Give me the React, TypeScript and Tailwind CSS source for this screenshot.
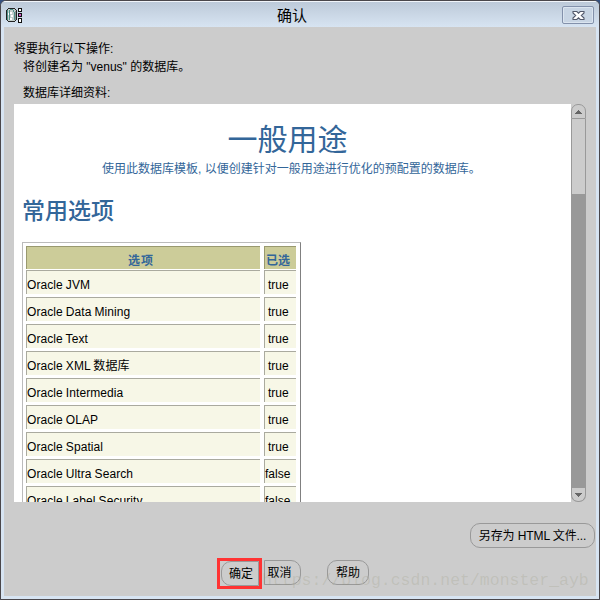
const options = [
    { name: 'Oracle JVM', selected: true },
    { name: 'Oracle Data Mining', selected: true },
    { name: 'Oracle Text', selected: true },
    { name: 'Oracle XML 数据库', selected: true },
    { name: 'Oracle Intermedia', selected: true },
    { name: 'Oracle OLAP', selected: true },
    { name: 'Oracle Spatial', selected: true },
    { name: 'Oracle Ultra Search', selected: false },
    { name: 'Oracle Label Security', selected: false },
];

function DatabaseIcon() {
    return (
        <svg width="18" height="16" viewBox="0 0 18 16" shapeRendering="crispEdges" className="mt-[3px]">
            <path d="M2 1h7v1h1v11H9v1H2v-1H1V2h1z" fill="#c3cfcc" />
            <path d="M2 0h7v1H2zM1 1h1v1H1zM9 1h1v1H9zM0 2h1v10H0zM10 2h1v10h-1zM1 12h1v1H1zM9 12h1v1H9zM2 13h7v1H2z" fill="#222" />
            <path d="M1 2h1v10H1zM3 2h1v10H3zM7 2h1v2H7zM8 4h1v8H8zM4 1h3v1H4z" fill="#4f8f88" />
            <path d="M4 4h2v2H4zM5 7h2v2H5zM4 10h2v2H4zM2 5h1v2H2z" fill="#fff" />
            <path d="M9 3h1v9H9z" fill="#8a9290" />
            <path d="M12 0h4v4h-4zM12 5h4v4h-4zM12 10h4v5h-4z" fill="#111" />
            <path d="M13 1h2v2h-2zM13 11h2v3h-2z" fill="#fff" />
            <path d="M13 6h2v2h-2z" fill="#d45bc8" />
        </svg>
    );
}

function TitleBar() {
    return (
        <div className="relative flex h-[26px] shrink-0 items-center justify-between border-t border-[#f1f5fa] bg-linear-to-b from-[#bdcad9] to-[#d7e4f2] pl-[5px] pr-[5px]">
            <DatabaseIcon />
            <span className="absolute left-[276px] top-[4px] text-[15px] leading-[20px]">确认</span>
            <button className="mt-px flex h-[18px] w-[32px] items-center justify-center rounded-[2px] border border-[#8391ab] bg-[#c8d5e4] shadow-[inset_0_0_0_1px_#dbe5f0]">
                <svg width="13" height="11" viewBox="0 0 13 11">
                    <path d="M1 1.5h3.8L6.5 3.2 8.2 1.5H12V3L9.3 5.5 12 8v1.5H8.2L6.5 7.8 4.8 9.5H1V8l2.7-2.5L1 3z" fill="#fff" stroke="#53596b" strokeWidth="1.1" />
                </svg>
            </button>
        </div>
    );
}

function ScrollBar() {
    return (
        <div className="flex w-[15px] shrink-0 flex-col bg-[#cccccc]">
            <div className="flex h-[15px] items-center justify-center rounded-t-[7px] border border-[#999999]">
                <svg width="7" height="4" viewBox="0 0 7 4" shapeRendering="crispEdges">
                    <path d="M3 0h1v1h1v1h1v1h1v1H0V3h1V2h1V1h1z" fill="#666" />
                </svg>
            </div>
            <div className="h-[75px] border-x border-[#999999]" />
            <div className="flex-1 bg-[#999999]" />
            <div className="flex h-[14px] items-center justify-center rounded-b-[7px] border border-t-0 border-[#999999]">
                <svg width="7" height="4" viewBox="0 0 7 4" shapeRendering="crispEdges">
                    <path d="M0 0h7v1H6v1H5v1H4v1H3V3H2V2H1V1H0z" fill="#666" />
                </svg>
            </div>
        </div>
    );
}

function OptionsTable() {
    return (
        <div className="ml-2 mt-[17px] w-[279px] border border-b-0 border-[#bbbbbb] border-r-[#808080] pl-[3px] pt-[3px]">
            <div className="mb-px flex h-[23px] gap-1 text-[12px] font-bold text-[#336699]">
                <div className="flex w-[234px] items-center justify-center border-l border-t border-[#99996f] bg-[#cccc99] pr-[5px] pt-[5px] tracking-[1px]">选项</div>
                <div className="flex w-[32px] items-center border-l border-t border-[#99996f] bg-[#cccc99] pl-px pt-[5px]">已选</div>
            </div>
            {options.map((option) => (
                <div key={option.name} className="mb-[3px] flex h-[24px] gap-1">
                    <div className="flex w-[234px] items-end whitespace-nowrap border-l border-t border-[#aaaa9f] bg-[#f7f7e7] pb-px leading-[16px] tracking-[0.08px] [word-spacing:-0.4px]">{option.name}</div>
                    <div className="flex w-[32px] items-end border-l border-t border-[#aaaa9f] bg-[#f7f7e7] pb-px leading-[16px]">
                        <span className={option.selected ? 'pl-[3px]' : ''}>{option.selected ? 'true' : 'false'}</span>
                    </div>
                </div>
            ))}
        </div>
    );
}

export default function App() {
    return (
        <div className="h-[600px] w-[600px] overflow-hidden bg-[#34507f] font-['Liberation_Sans','Noto_Sans_CJK_SC',sans-serif] text-[12px] text-black">
            <div className="relative flex h-full flex-col overflow-hidden rounded-t-[6px] border border-[#4a474b] bg-[#d7e4f2]">
                <TitleBar />
                <div className="mx-[3px] mb-[3px] flex min-h-0 flex-1 flex-col bg-[#cccccc]">
                    <div className="pl-[10px] pt-[13px] leading-[18px]">
                        <p>将要执行以下操作:</p>
                        <p className="pl-[9px]">将创建名为 "venus" 的数据库。</p>
                        <p className="pl-[9px] pt-2">数据库详细资料:</p>
                    </div>

                    <div className="ml-[10px] mt-[2px] flex h-[398px] w-[572px] shrink-0">
                        <div className="flex-1 overflow-hidden bg-white">
                            <h1 className="mt-[18px] pr-[10px] text-center text-[30px] leading-[36px] text-[#336699]">一般用途</h1>
                            <p className="pl-[88px] pt-[2px] leading-[18px] text-[#336699]">使用此数据库模板, 以便创建针对一般用途进行优化的预配置的数据库。</p>
                            <h2 className="ml-2 mt-[19px] text-[23px] font-medium leading-[28px] text-[#336699]">常用选项</h2>
                            <OptionsTable />
                        </div>
                        <ScrollBar />
                    </div>

                    <div className="mt-[21px] flex justify-end pr-px">
                        <button className="h-[25px] w-[125px] rounded-[10px] border border-[#999999] tracking-[-0.1px]">另存为 HTML 文件...</button>
                    </div>

                    <div className="mt-[10px] flex pl-[213px]">
                        <div className="flex h-[31px] w-[45px] items-center justify-center border-3 border-[#ff3333]">
                            <button className="h-[25px] w-[38px] rounded-l-[10px] border border-[#999999] pl-[3px]">确定</button>
                        </div>
                        <button className="ml-[2px] mt-[2px] h-[25px] w-[37px] rounded-r-[10px] border border-[#999999] pr-[6px] pt-px">取消</button>
                        <button className="ml-[26px] mt-[2px] h-[25px] w-[42px] rounded-[10px] border border-[#999999] pt-px">帮助</button>
                    </div>
                </div>
                <span className="pointer-events-none absolute left-[261px] top-[569px] font-['Liberation_Mono',monospace] text-[16.5px] leading-[22px] text-[#8f8f70]/20">https://blog.csdn.net/monster_ayb</span>
            </div>
        </div>
    );
}
